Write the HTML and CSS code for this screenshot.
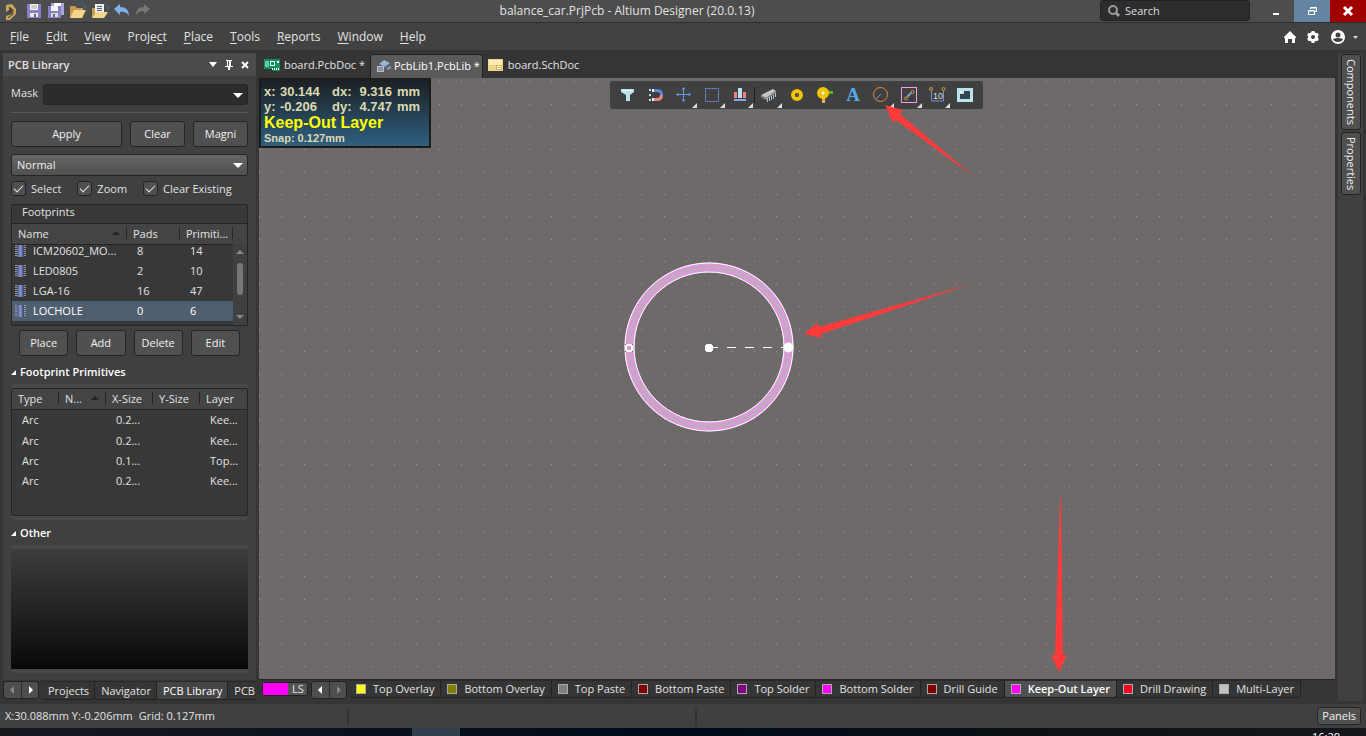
FILE: index.html
```html
<!DOCTYPE html>
<html lang="en">
<head>
    <meta charset="UTF-8">
    <meta name="viewport" content="width=device-width, initial-scale=1.0">
    <title>balance_car.PrjPcb - Altium Designer (20.0.13)</title>
    <link rel="stylesheet" href="styles.css">
</head>
<body>
    <header class="titlebar">
        <div class="quick">
            <svg class="logo" width="22" height="22"><path d="M6 5l6-1 4 5v5l-6 6H6v-4l6-2V9L9 7v3l-3 2z" fill="#c9a55c"/><path d="M8 12l5-2M9 7l4 3v4l-5 4" stroke="#4b3b20" fill="none"/></svg>
            <button title="Save"><svg width="22" height="22"><path d="M5 4h14v14H5z" fill="#8583c4"/><path d="M8 4h8v6H8z" fill="#f5f5f5"/><path d="M9 6h6M9 8h6" stroke="#aaa"/><path d="M8 13h8v4H8z" fill="#e8e8f0"/><path d="M12 14h2v3h-2z" fill="#666"/></svg></button>
            <button title="Save All"><svg width="22" height="22"><path d="M7 3h13v12H7z" fill="#aaa8de"/><path d="M10 3h7v3h-7z" fill="#fff"/><path d="M4 6h13v12H4z" fill="#8583c4"/><path d="M7 6h7v5H7z" fill="#f5f5f5"/><path d="M7 13h7v4H7z" fill="#ddddea"/><path d="M9 14h2v3H9z" fill="#666"/></svg></button>
            <button title="Open"><svg width="22" height="22"><path d="M4 6h5l2 2h6v9H4z" fill="#c79b4b"/><path d="M8 10h12l-4 8H4z" fill="#f4d48c"/><path d="M13 4q5-2 6 3M17 6l2 2 1-3" stroke="#3e6a8c" fill="none"/></svg></button>
            <button title="Open Project"><svg width="22" height="22"><path d="M4 8h4v9H4z" fill="#c79b4b"/><path d="M7 4h9v11H7z" fill="#f1f3f6"/><path d="M9 6.500h5M9 8.500h5M9 10.500h5" stroke="#4d5c77"/><path d="M8 12h12l-4 6H4z" fill="#f4d48c"/><path d="M16 4q4 0 4 4M18 7l2 2 1-3" stroke="#3e6a8c" fill="none"/></svg></button>
            <button title="Undo"><svg width="22" height="22"><path d="M4 9l6-5v3q9 0 9 9-3-5-9-4v3z" fill="#82b1e8"/></svg></button>
            <button title="Redo"><svg width="22" height="22"><path d="M18 9l-6-5v3q-8 0-8 8 3-4 8-4v3z" fill="#777"/></svg></button>
        </div>
        <h1 class="app-title">balance_car.PrjPcb - Altium Designer (20.0.13)</h1>
        <label class="search">
            <svg width="14" height="14"><circle cx="6" cy="6" r="4" fill="none" stroke="#9a9a9a" stroke-width="2"/><path d="M9 9l3 3" stroke="#9a9a9a" stroke-width="3"/></svg>
            <input type="text" placeholder="Search" aria-label="Search">
        </label>
        <div class="window-buttons">
            <button title="Minimize"><svg width="12" height="12"><path d="M3 8h6v2H3z" fill="#fff"/></svg></button>
            <button class="restore" title="Restore"><svg width="12" height="12" fill="none" stroke="#fff"><path d="M4.500 4V2.500h6v4H9M4 3h7"/><path d="M2.500 5.500h6v4h-6zM2 6h7"/></svg></button>
            <button class="close" title="Close"><svg width="12" height="12"><path d="M2 2l8 8M10 2l-8 8" stroke="#fff" stroke-width="3"/></svg></button>
        </div>
    </header>

    <nav class="menubar">
        <a href="#"><u>F</u>ile</a>
        <a href="#"><u>E</u>dit</a>
        <a href="#"><u>V</u>iew</a>
        <a href="#">Proje<u>c</u>t</a>
        <a href="#"><u>P</u>lace</a>
        <a href="#"><u>T</u>ools</a>
        <a href="#"><u>R</u>eports</a>
        <a href="#"><u>W</u>indow</a>
        <a href="#"><u>H</u>elp</a>
        <div class="account">
            <button title="Home"><svg width="14" height="14"><path d="M7 1l6 6v1h-1v5H9V9H5v4H2V8H1V7z" fill="#fff"/></svg></button>
            <button title="Preferences"><svg width="14" height="14" fill="none" stroke="#fff"><circle cx="7" cy="7" r="3.500" stroke-width="3"/><path stroke-width="3" d="M7 1v12M1.800 4l10.400 6M1.800 10l10.400-6"/><circle cx="7" cy="7" r="2" fill="#424242" stroke="none"/></svg></button>
            <button class="user" title="Account"><svg width="28" height="14"><circle cx="7" cy="7" r="7" fill="#fff"/><circle cx="7" cy="5" r="2.500" fill="#424242"/><path d="M2 9q5-2 10 0-1 3-5 3T2 9z" fill="#424242"/><path d="M22 6h5l-2.500 3z" fill="#ddd"/></svg></button>
        </div>
    </nav>

    <div class="workspace">
        <aside class="side">
            <section class="panel">
                <div class="panel-head">
                    <h2>PCB Library</h2>
                    <button title="Menu"><svg width="10" height="10"><path d="M1 2h8L5 7z" fill="#fff"/></svg></button>
                    <button title="Pin"><svg width="10" height="10"><path d="M2 0h6v1H7v5h2v1H1V6h2V1H2zM4 7h2v3H4z" fill="#fff"/><path d="M4 1h1v5H4z" fill="#555"/></svg></button>
                    <button title="Close panel"><svg width="10" height="10"><path d="M2 2l6 6M8 2l-6 6" stroke="#fff" stroke-width="2"/></svg></button>
                </div>
                <div class="panel-body">
                    <div class="mask-row">
                        <label for="mask">Mask</label>
                        <span class="drop dark"><select id="mask"><option></option></select></span>
                    </div>
                    <div class="action-row">
                        <button class="btn wide">Apply</button>
                        <button class="btn">Clear</button>
                        <button class="btn">Magni</button>
                    </div>
                    <span class="drop"><select aria-label="View mode"><option>Normal</option></select></span>
                    <div class="checks">
                        <label><input type="checkbox" checked>Select</label>
                        <label><input type="checkbox" checked>Zoom</label>
                        <label><input type="checkbox" checked>Clear Existing</label>
                    </div>

                    <div class="listbox footprints">
                        <h3>Footprints</h3>
                        <table>
                            <colgroup><col class="c-name"><col class="c-num"><col class="c-num"><col></colgroup>
                            <thead>
                                <tr><th class="sorted">Name</th><th>Pads</th><th>Primiti...</th><th></th></tr>
                            </thead>
                            <tbody>
                                <tr class="cut"><td><i class="chip"></i>ICM20602_MO...</td><td>8</td><td>14</td></tr>
                                <tr><td><i class="chip"></i>LED0805</td><td>2</td><td>10</td></tr>
                                <tr><td><i class="chip"></i>LGA-16</td><td>16</td><td>47</td></tr>
                                <tr class="selected"><td><i class="chip"></i>LOCHOLE</td><td>0</td><td>6</td></tr>
                                <tr><td><i class="chip"></i></td><td></td><td></td></tr>
                            </tbody>
                        </table>
                        <div class="scrollbar"><i class="up"></i><i class="thumb"></i><i class="down"></i></div>
                    </div>

                    <div class="edit-row">
                        <button class="btn">Place</button>
                        <button class="btn">Add</button>
                        <button class="btn">Delete</button>
                        <button class="btn">Edit</button>
                    </div>

                    <h3 class="group">Footprint Primitives</h3>
                    <div class="frame">
                        <div class="listbox primitives">
                            <table>
                                <thead>
                                    <tr><th>Type</th><th class="sorted">N...</th><th>X-Size</th><th>Y-Size</th><th>Layer</th></tr>
                                </thead>
                                <tbody>
                                    <tr><td>Arc</td><td></td><td>0.2...</td><td></td><td>Kee...</td></tr>
                                    <tr><td>Arc</td><td></td><td>0.2...</td><td></td><td>Kee...</td></tr>
                                    <tr><td>Arc</td><td></td><td>0.1...</td><td></td><td>Top...</td></tr>
                                    <tr><td>Arc</td><td></td><td>0.2...</td><td></td><td>Kee...</td></tr>
                                </tbody>
                            </table>
                        </div>
                    </div>

                    <h3 class="group">Other</h3>
                    <div class="frame preview"><div class="preview-area"></div></div>
                </div>
            </section>
            <div class="panel-tabs">
                <div class="stepper"><button class="off" title="Previous"><svg width="17" height="16"><path d="M10 4v8L6 8z"/></svg></button><button title="Next"><svg width="17" height="16"><path d="M7 4v8l4-4z"/></svg></button></div>
                <button class="tab">Projects</button>
                <button class="tab">Navigator</button>
                <button class="tab active">PCB Library</button>
                <button class="tab">PCB</button>
            </div>
        </aside>

        <main class="editor">
            <div class="doc-tabs">
                <button><svg width="16" height="14"><path d="M0 1h16v12H9v-2H0z" fill="#109060"/><path d="M2 3v6M4 3v6" stroke="#b8ffe0"/><path d="M6 3h5v5H6z" fill="#e8fff4"/><path d="M7 4h3v3H7z" fill="#109060"/><path d="M8 11h7" stroke="#fff" stroke-width="2" stroke-dasharray="1 1"/><path d="M13 3h2v2h-2z" fill="#fff"/></svg>board.PcbDoc *</button>
                <button class="active"><svg width="16" height="14"><path d="M3 5l5-4 6 3-5 4z" fill="#9ab4d0"/><path d="M3 5l6 3v3L3 8zM9 8l5-4v3l-5 4z" fill="#51647a"/><path d="M12 8v3M14 7v3" stroke="#b5c2ce"/><path d="M1 7h7v6H1z" fill="#b4bcc4"/><path d="M2 8h5v4H2z" fill="#8a949e"/></svg>PcbLib1.PcbLib *</button>
                <button><svg width="16" height="14"><path d="M0 1h15v12H0z" fill="#f0d488"/><path d="M1 2h13v5H1z" fill="#fbe9b6"/><path d="M8 7h6v5H8z" fill="#d8b45c"/><path d="M9 8.500h4M9 10.500h4" stroke="#fff"/></svg>board.SchDoc</button>
            </div>

            <div class="canvas">
                <svg class="drawing">
                    <defs>
                        <pattern id="grid" width="45" height="45" patternUnits="userSpaceOnUse">
                            <path d="M0 3h1v1H0zM22 3h1v1h-1zM0 26h1v1H0zM22 26h1v1h-1z" fill="#a09c9a"/>
                        </pattern>
                        <pattern id="hatch" width="7" height="7" patternUnits="userSpaceOnUse">
                            <rect width="7" height="7" fill="#b8b2b5"/>
                            <path d="M0 0l7 7M7 0L0 7" stroke="#ff7dff"/>
                        </pattern>
                    </defs>
                    <rect width="100%" height="100%" fill="url(#grid)"/>
                    <g fill="none">
                        <circle cx="450" cy="269" r="79.500" stroke="url(#hatch)" stroke-width="10"/>
                        <circle cx="450" cy="269" r="83" stroke="#f58af5"/>
                        <circle cx="450" cy="269" r="76" stroke="#f58af5"/>
                        <circle cx="450" cy="269" r="84" stroke="#fff"/>
                        <circle cx="450" cy="269" r="75" stroke="#fff"/>
                    </g>
                    <path d="M450 269.500h74" stroke="#fff" stroke-dasharray="9 9"/>
                    <rect x="446" y="266" width="8" height="8" fill="#111"/>
                    <rect x="446" y="266" width="8" height="8" rx="2" fill="#fff"/>
                    <rect x="366" y="266" width="8" height="8" fill="#222"/>
                    <rect x="367" y="267" width="6" height="6" rx="1" fill="#d49ad4" stroke="#fff" stroke-width="2"/>
                    <circle cx="529.500" cy="269.500" r="5" fill="#fff"/>
                </svg>

                <div class="hud">
                    <dl>
                        <dt>x:</dt><dd>30.144</dd><dt>dx:</dt><dd class="right">9.316</dd><dd>mm</dd>
                        <dt>y:</dt><dd>-0.206</dd><dt>dy:</dt><dd class="right">4.747</dd><dd>mm</dd>
                    </dl>
                    <p class="layer-name">Keep-Out Layer</p>
                    <p class="snap">Snap: 0.127mm</p>
                </div>

                <div class="toolbar">
                    <button title="Filter"><svg width="28" height="28"><path d="M7 8h13v3l-4 3v6h-4v-6l-5-3z" fill="#b9e2ee"/><path d="M9 9.500h9" stroke="#fff"/></svg></button>
                    <button title="Snap"><svg width="28" height="28" fill="none"><path d="M12 9.500h3q4.500 0 4.500 4.500" stroke="#5d86df" stroke-width="3"/><path d="M12 18.500h3q4.500 0 4.500-4.500" stroke="#ed8283" stroke-width="3"/><path d="M7 8h2v2H7zM7 13h2v2H7zM7 18h2v2H7z" fill="#b9e2ee"/><path d="M10 8h2v3h-2zM10 17h2v3h-2z" fill="#e8f1f5"/></svg></button>
                    <button class="more" title="Move"><svg width="28" height="28"><path d="M13.500 7v13M7 13.500h13M12 8.500l1.500-2 1.500 2M12 18.500l1.500 2 1.500-2M8.500 12l-2 1.500 2 1.500M18.500 12l2 1.500-2 1.500" stroke="#6b97ee" fill="none"/></svg></button>
                    <button class="more" title="Select"><svg width="28" height="28"><rect x="7.500" y="7.500" width="13" height="13" fill="none" stroke="#7196f0" stroke-dasharray="2 1"/></svg></button>
                    <button class="more" title="Align"><svg width="28" height="28"><path d="M8 11h3v6H8zM17 11h3v6h-3z" fill="#ed8283"/><path d="M12 7h4v10h-4z" fill="#b9e2ee"/><path d="M8 18h12v2H8z" fill="#83a5f5"/></svg></button>
                    <i class="divider"></i>
                    <button class="more" title="Component"><svg width="28" height="28"><path d="M6 14l12-6 3 2-10 7z" fill="#c2c2c2"/><path d="M6 14l5 3v2l-5-3zM11 17l10-7v2l-10 7z" fill="#8a8a8a"/><path d="M12.500 17v4M14.500 16v4M16.500 15v4M18.500 14v4M20.500 12v4" stroke="#a9c3cf"/></svg></button>
                    <button title="Pad"><svg width="28" height="28"><circle cx="14" cy="14" r="4" fill="none" stroke="#f2c500" stroke-width="4"/><circle cx="14" cy="14" r="2" fill="#565656"/></svg></button>
                    <button title="Via"><svg width="28" height="28"><path d="M11 15h3v7h-3z" fill="#f5a957"/><path d="M16 10h6v3h-6z" fill="#58b51c"/><circle cx="12" cy="12" r="4" fill="none" stroke="#f2c500" stroke-width="4"/><circle cx="12" cy="12" r="2" fill="#fff2b0"/></svg></button>
                    <button class="string" title="String">A</button>
                    <button class="more" title="Arc"><svg width="28" height="28" fill="none"><circle cx="13.500" cy="13.500" r="7" stroke="#e08b3e"/><path d="M9 18l5-5" stroke="#6b97ee"/></svg></button>
                    <button class="more" title="Line"><svg width="28" height="28" fill="none"><rect x="6.500" y="6.500" width="15" height="15" stroke="#f59af0"/><path d="M12 16l4-4" stroke="#7c9ee8" stroke-width="2"/><circle cx="11" cy="17.500" r="1.500" stroke="#d19a3c"/><circle cx="17.500" cy="11" r="1.500" stroke="#d19a3c"/></svg></button>
                    <button class="more" title="Dimension"><svg width="28" height="28" fill="none"><path d="M8.500 10v10h12V10" stroke="#6f91d8"/><circle cx="8" cy="8" r="1.500" stroke="#d19a3c"/><circle cx="20.500" cy="8" r="1.500" stroke="#d19a3c"/><text x="10" y="18" class="dim">10</text></svg></button>
                    <button title="Region"><svg width="28" height="28"><path d="M6 7h16v14H6z" fill="#b9e2ee"/><path d="M13 10h6v8H9v-5h4z" fill="#37454e"/><path d="M9 10h3v2H9z" fill="#dff4fa"/></svg></button>
                </div>

                <svg class="arrows">
                    <path d="M626 27l18 5-3 4 73 62-77-56-3 3z"/>
                    <path d="M545 256l13-11 2 4 152-43-150 50 1 4z"/>
                    <path d="M801 421h1l2 156h4l-8 17-8-17h4z"/>
                </svg>
            </div>

            <div class="layers">
                <button class="layer-set"><i></i>LS</button>
                <div class="stepper"><button title="Previous layer"><svg width="17" height="16"><path d="M10 4v8L6 8z"/></svg></button><button class="off" title="Next layer"><svg width="17" height="16"><path d="M7 4v8l4-4z"/></svg></button></div>
                <button class="tab"><i class="sw yellow"></i>Top Overlay</button>
                <button class="tab"><i class="sw olive"></i>Bottom Overlay</button>
                <button class="tab"><i class="sw gray"></i>Top Paste</button>
                <button class="tab"><i class="sw maroon"></i>Bottom Paste</button>
                <button class="tab"><i class="sw purple"></i>Top Solder</button>
                <button class="tab"><i class="sw magenta"></i>Bottom Solder</button>
                <button class="tab"><i class="sw maroon"></i>Drill Guide</button>
                <button class="tab active"><i class="sw magenta"></i>Keep-Out Layer</button>
                <button class="tab"><i class="sw red"></i>Drill Drawing</button>
                <button class="tab"><i class="sw silver"></i>Multi-Layer</button>
            </div>
        </main>

        <aside class="rail">
            <button>Components</button>
            <button>Properties</button>
        </aside>
    </div>

    <footer class="status">
        <span class="coords">X:30.088mm Y:-0.206mm</span>
        <span>Grid: 0.127mm</span>
        <button class="btn">Panels</button>
    </footer>
    <div class="taskbar"><i></i><span>16:20</span></div>
</body>
</html>
```
FILE: styles.css
```css
* {
    box-sizing: border-box;
}
body {
    margin: 0;
    height: 100vh;
    display: flex;
    flex-direction: column;
    overflow: hidden;
    background: #353535;
    color: #e2e2e2;
    font: 11px/16px "Open Sans", "Noto Sans", sans-serif;
}
h1, h2, h3, p, dl, dd {
    margin: 0;
    font-size: inherit;
}
button, input, select {
    font: inherit;
    color: inherit;
}
button {
    padding: 0;
    border: 0;
    background: none;
    white-space: nowrap;
}
svg {
    display: block;
}
a {
    color: inherit;
    text-decoration: none;
}
.btn {
    height: 26px;
    border: 1px solid #242424;
    border-radius: 3px;
    background: #505050;
    color: #f2f2f2;
}

/* title bar */
.titlebar {
    display: flex;
    height: 23px;
    background: #4d4d4d;
    border-bottom: 1px solid #2e2e2e;
}
.quick {
    display: flex;
}
.app-title {
    flex: 1;
    text-align: center;
    font-size: 12px;
    font-weight: normal;
    line-height: 22px;
}
.search {
    display: flex;
    align-items: center;
    gap: 4px;
    width: 150px;
    height: 21px;
    padding-left: 6px;
    background: #2d2d2d;
    border: 1px solid #222;
    border-radius: 3px;
}
.search input {
    flex: 1;
    min-width: 0;
    padding: 0;
    border: 0;
    outline: 0;
    background: none;
}
.search input::placeholder {
    color: #ddd;
    opacity: 1;
}
.window-buttons {
    display: flex;
    margin-left: 8px;
}
.window-buttons button {
    display: grid;
    place-items: center;
    width: 36px;
}
.window-buttons .restore {
    background: #6484a4;
}
.window-buttons .close {
    background: #a00000;
}

/* menu */
.menubar {
    display: flex;
    align-items: center;
    gap: 17px;
    height: 27px;
    padding: 0 7px 0 10px;
    background: #424242;
    font-size: 12px;
}
.menubar u {
    text-underline-offset: 2px;
}
.account {
    display: flex;
    gap: 9px;
    margin-left: auto;
}
.account .user {
    margin-left: 2px;
}

.workspace {
    flex: 1;
    display: flex;
    min-height: 0;
    padding: 3px;
}

/* left panel */
.side {
    display: flex;
    flex-direction: column;
    width: 253px;
}
.panel {
    flex: 1;
    display: flex;
    flex-direction: column;
    min-height: 0;
    background: #404040;
}
.panel-head {
    display: flex;
    align-items: center;
    gap: 6px;
    height: 23px;
    padding: 0 6px 0 5px;
    background: #4b4b4b;
}
.panel-head h2 {
    flex: 1;
    font-weight: 600;
}
.panel-body {
    flex: 1;
    display: flex;
    flex-direction: column;
    padding: 8px 8px 7px;
}
.mask-row {
    display: flex;
    gap: 5px;
    padding-bottom: 7px;
    border-bottom: 1px solid #5a5a5a;
    line-height: 18px;
}
.mask-row .drop {
    flex: 1;
}
.drop {
    position: relative;
    display: block;
}
.drop::after {
    content: "";
    position: absolute;
    right: 5px;
    top: 9px;
    border: 5px solid transparent;
    border-top-color: #fff;
    border-bottom: 0;
    pointer-events: none;
}
.drop select {
    appearance: none;
    display: block;
    width: 100%;
    height: 22px;
    padding: 0 5px;
    border: 1px solid #242424;
    border-radius: 3px;
    background: linear-gradient(#666, #505050);
    color: #eee;
}
.drop.dark select {
    height: 21px;
    background: #2c2c2c;
}
.action-row {
    display: flex;
    gap: 8px;
    margin: 8px 0 7px;
}
.action-row .btn {
    width: 55px;
}
.action-row .wide {
    flex: 1;
}
.checks {
    display: flex;
    gap: 16px;
    margin: 4px 0 7px;
}
.checks label {
    display: flex;
    align-items: center;
    gap: 5px;
    height: 17px;
}
.checks input {
    appearance: none;
    display: grid;
    place-items: center;
    width: 15px;
    height: 15px;
    margin: 0;
    border: 1px solid #242424;
    border-radius: 3px;
    background: #505050;
}
.checks input:checked::before {
    content: "";
    width: 8px;
    height: 4px;
    border: solid #e8e8e8;
    border-width: 0 0 1px 1px;
    transform: translateY(-1px) rotate(-45deg);
}

/* lists */
.listbox {
    position: relative;
    overflow: hidden;
    border: 1px solid #242424;
    border-radius: 2px;
    background: #383838;
}
.listbox table {
    width: 100%;
    table-layout: fixed;
    border-collapse: collapse;
}
.listbox th {
    position: relative;
    height: 20px;
    padding: 0 0 0 6px;
    background: #444;
    border-bottom: 1px solid #242424;
    font-weight: normal;
    text-align: left;
}
.listbox th::after {
    content: "";
    position: absolute;
    right: 0;
    top: 3px;
    width: 1px;
    height: 12px;
    background: #242424;
}
.listbox th:last-child::after {
    display: none;
}
.listbox .sorted::before {
    content: "";
    position: absolute;
    right: 7px;
    top: 7px;
    border: 4px solid transparent;
    border-top: 0;
    border-bottom-color: #242424;
}
.listbox td {
    height: 20px;
    padding: 0 0 0 10px;
    white-space: nowrap;
}
.footprints {
    height: 122px;
}
.footprints h3 {
    height: 19px;
    padding: 0 10px;
    line-height: 14px;
    border-bottom: 1px solid #242424;
    font-weight: normal;
}
.c-name {
    width: 115px;
}
.c-num {
    width: 53px;
}
.footprints td:first-child {
    padding-left: 3px;
}
.footprints .cut td {
    height: 16px;
    padding-bottom: 4px;
    line-height: 12px;
}
.footprints .selected td {
    background: #4f5f70;
    color: #fff;
}
.chip {
    display: inline-block;
    width: 11px;
    height: 12px;
    margin: 2px 7px 0 0;
    vertical-align: top;
    background:
        linear-gradient(90deg, #4d5888, #8793c4 50%, #35406c) center / 7px 12px no-repeat,
        repeating-linear-gradient(#9a9a9a 0 1px, transparent 1px 2px);
}
.cut .chip {
    margin-top: 0;
}
.scrollbar {
    position: absolute;
    right: 0;
    top: 39px;
    bottom: 0;
    width: 14px;
    display: flex;
    flex-direction: column;
    align-items: center;
    padding: 6px 0;
    background: #404040;
}
.scrollbar .up, .scrollbar .down {
    border: 4px solid transparent;
    border-top: 0;
    border-bottom-color: #888;
}
.scrollbar .down {
    transform: rotate(180deg);
    margin-top: auto;
}
.scrollbar .thumb {
    width: 6px;
    height: 32px;
    margin-top: 9px;
    border-radius: 3px;
    background: #777;
}
.edit-row {
    display: flex;
    gap: 8px;
    padding: 4px 8px 8px;
}
.edit-row .btn {
    flex: 1;
}
.group {
    display: flex;
    align-items: center;
    gap: 4px;
    height: 16px;
    font-weight: 600;
    color: #fff;
}
.group::before {
    content: "";
    border: solid transparent;
    border-width: 0 0 5px 5px;
    border-bottom-color: #fff;
}
.frame {
    margin: 4px 0 5px;
    padding: 4px 0;
    border-radius: 3px;
    background: #484848;
}
.primitives {
    height: 128px;
}
.primitives tbody tr:first-child td {
    height: 22px;
}
.preview {
    flex: 1;
    display: flex;
    margin-bottom: 0;
}
.preview-area {
    flex: 1;
    background: linear-gradient(#3d3d3d, #090909);
}

/* tab strips */
.panel-tabs {
    display: flex;
    height: 21px;
    padding-top: 1px;
    overflow: hidden;
}
.tab {
    height: 19px;
    flex-shrink: 0;
    padding: 0 6px;
    border: 1px solid #222;
    border-top-color: #2a2a2a;
    border-left-width: 0;
    border-radius: 0 0 3px 3px;
    background: #353535;
    line-height: 16px;
}
.tab.active {
    background: #454545;
    color: #fff;
}
.panel-tabs .tab {
    padding: 0 5px 0 6px;
}
.stepper {
    display: flex;
    flex-shrink: 0;
    width: 36px;
    height: 18px;
    margin-right: 3px;
    border: 1px solid #222;
    border-radius: 3px;
    background: #4e4e4e;
    fill: #fff;
}
.stepper button {
    flex: 1;
}
.stepper button + button {
    border-left: 1px solid #2a2a2a;
}
.stepper .off {
    fill: #888;
}

/* editor */
.editor {
    flex: 1;
    display: flex;
    flex-direction: column;
    min-width: 0;
    margin: 0 3px;
}
.doc-tabs {
    display: flex;
    height: 25px;
    padding-top: 1px;
}
.doc-tabs button {
    display: flex;
    align-items: center;
    gap: 4px;
    height: 22px;
    padding: 0 5px;
}
.doc-tabs .active {
    gap: 2px;
    height: 24px;
    padding: 0 2px 2px 5px;
    border: 1px solid #222;
    border-bottom: 0;
    border-radius: 3px 3px 0 0;
    background: #5a5a5a;
    color: #fff;
}
.canvas {
    position: relative;
    flex: 1;
    min-height: 0;
    overflow: hidden;
    background: #6e6a69;
}
.drawing, .arrows {
    position: absolute;
    inset: 0;
    width: 100%;
    height: 100%;
}
.arrows {
    fill: #ff3a3a;
    pointer-events: none;
}
.hud {
    position: absolute;
    left: 0;
    top: 0;
    width: 172px;
    height: 70px;
    padding: 5px 3px;
    border: 2px solid #1c1c1c;
    border-top-width: 1px;
    background: linear-gradient(#1c1f22, #2f5f80);
    color: #dddab2;
    font: bold 13px/15px "Liberation Sans", Arial, sans-serif;
}
.hud dl {
    display: grid;
    grid-template-columns: 16px 52px 24px 36px 1fr;
}
.hud dd:nth-of-type(3n) {
    padding-left: 5px;
}
.hud .right {
    text-align: right;
}
.hud .layer-name {
    color: #ff0;
    font-size: 16px;
    line-height: 18px;
}
.hud .snap {
    font-size: 11px;
    line-height: 13px;
}
.toolbar {
    position: absolute;
    left: 351px;
    top: 3px;
    display: flex;
    height: 28px;
    padding: 0 4px;
    border-radius: 2px;
    background: #404040;
}
.toolbar button {
    position: relative;
    width: 28px;
}
.toolbar .more::after {
    content: "";
    position: absolute;
    right: 1px;
    bottom: 1px;
    border: solid transparent;
    border-width: 0 0 5px 5px;
    border-bottom-color: #ddd;
}
.toolbar .divider {
    width: 1px;
    height: 16px;
    margin-top: 6px;
    background: #202020;
}
.toolbar .string {
    color: #55a8ec;
    font: bold 19px/28px "Liberation Serif", serif;
}
.dim {
    fill: #ddd;
    font: 9px "Liberation Sans", sans-serif;
}

/* layer bar */
.layers {
    display: flex;
    height: 22px;
    padding-left: 3px;
    border-top: 1px solid #252525;
}
.layers .tab {
    display: flex;
    align-items: center;
    gap: 7px;
    height: 18px;
}
.layers .tab.active {
    background: #505050;
    font-weight: 600;
}
.layers .stepper {
    margin-top: 1px;
}
.layer-set {
    display: flex;
    width: 46px;
    height: 14px;
    margin: 2px 3px 0 0;
    border: 1px solid #222;
    border-radius: 3px;
    background: #555;
    line-height: 12px;
}
.layer-set i {
    width: 25px;
    height: 12px;
    margin-right: 4px;
    background: #f0f;
}
.sw {
    width: 10px;
    height: 10px;
    border: 1px solid #aaa;
}
.yellow { background: #ff0; }
.olive { background: #808000; }
.gray { background: #808080; }
.maroon { background: #800000; }
.purple { background: #800080; }
.magenta { background: #f0f; }
.red { background: #ff0028; }
.silver { background: #c0c0c0; }

/* right rail */
.rail {
    display: flex;
    flex-direction: column;
    gap: 2px;
    width: 25px;
    padding: 1px 2px 0 3px;
    background: #404040;
}
.rail button {
    padding: 4px 0;
    border: 1px solid #242424;
    border-radius: 3px;
    background: #505050;
    color: #eee;
    writing-mode: vertical-rl;
    line-height: 18px;
}

/* bottom */
.status {
    display: flex;
    align-items: center;
    height: 24px;
    padding: 0 5px;
    background:
        linear-gradient(#333, #333) 347px 5px / 2px 17px no-repeat,
        linear-gradient(#333, #333) 695px 5px / 2px 17px no-repeat,
        #404040;
}
.status .coords {
    margin-right: 6px;
}
.status .btn {
    height: 18px;
    margin-left: auto;
    padding: 0 4px;
    line-height: 14px;
}
.taskbar {
    display: flex;
    justify-content: space-between;
    height: 8px;
    padding: 0 26px 0 412px;
    overflow: hidden;
    background: linear-gradient(90deg, #17191f, #08101a 30%, #000b18 50%, #0b1114 75%, #15171c);
    color: #fff;
}
.taskbar i {
    width: 48px;
    background: #333f4b;
}
.taskbar span {
    padding-top: 1px;
}
```
